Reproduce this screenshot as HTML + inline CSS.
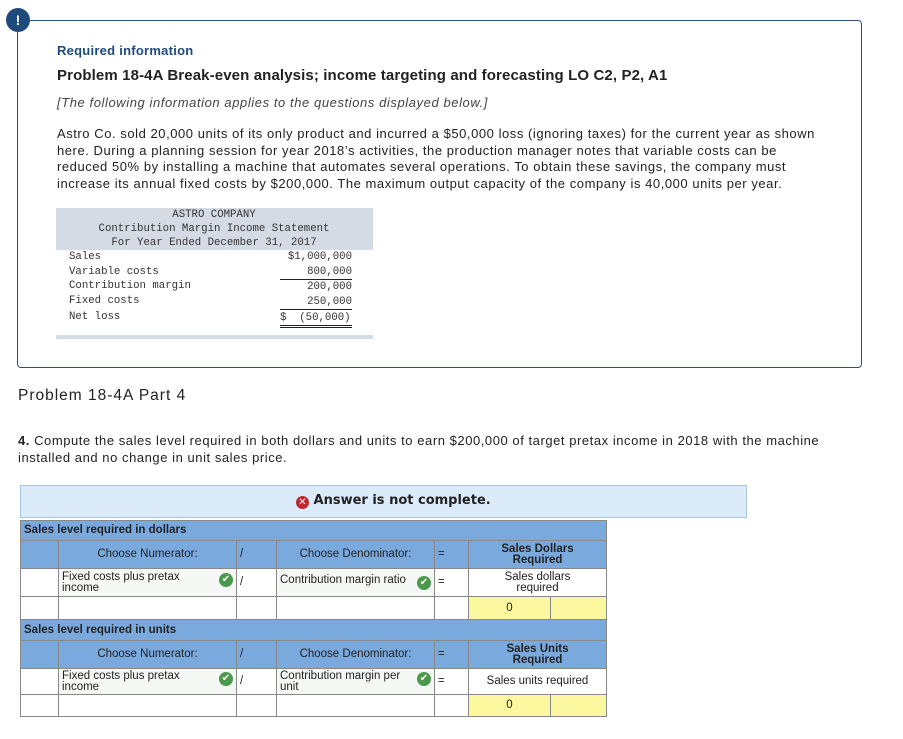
<!DOCTYPE html>
<html><head><meta charset="utf-8"><style>
body{margin:0;width:903px;height:739px;background:#fff;font-family:"Liberation Sans",Arial,sans-serif;color:#222;position:relative;overflow:hidden}
.abs{position:absolute}
.box{left:17px;top:20px;width:843px;height:346px;border:1px solid #2d4f7c;border-radius:4px}
.badge{left:6px;top:8px;width:24px;height:24px;border-radius:50%;background:#1f4a7c;color:#fff;font-weight:bold;font-size:14px;text-align:center;line-height:24px}
.p{font-size:13px;line-height:16.5px;white-space:nowrap;letter-spacing:0.55px}
.mono{font-family:"Liberation Mono",monospace;font-size:10.7px;color:#333}
table.t{border-collapse:collapse;font-size:11.5px;position:absolute;left:20px;top:520px;table-layout:fixed}
table.t td{border:1px solid #888;padding:0 3px;line-height:11px;vertical-align:middle;box-sizing:border-box}
.hd td{background:#7aa9de}
.sec td{background:#7aa9de;font-weight:bold;border-color:#7aa9de}
.y{background:#fbf8a0}
.g{background:#f6f8f6}
.ck{display:inline-block;width:14px;height:14px;border-radius:50%;background:#4b9a4b;color:#fff;font-size:10px;line-height:14px;text-align:center;float:right;margin-top:1px}
</style></head><body>
<div class="abs box"></div>
<div class="abs badge">!</div>
<div class="abs" style="left:57px;top:43px;font-size:13px;font-weight:bold;color:#1f4a7c;letter-spacing:0.25px">Required information</div>
<div class="abs" style="left:57px;top:67px;font-size:15px;font-weight:bold;color:#222;letter-spacing:0.12px">Problem 18-4A Break-even analysis; income targeting and forecasting LO C2, P2, A1</div>
<div class="abs p" style="left:57px;top:95px;font-style:italic;color:#444;letter-spacing:0.58px">[The following information applies to the questions displayed below.]</div>
<div class="abs p" style="left:57px;top:126px">Astro Co. sold 20,000 units of its only product and incurred a $50,000 loss (ignoring taxes) for the current year as shown<br>here. During a planning session for year 2018’s activities, the production manager notes that variable costs can be<br>reduced 50% by installing a machine that automates several operations. To obtain these savings, the company must<br>increase its annual fixed costs by $200,000. The maximum output capacity of the company is 40,000 units per year.</div>
<div class="abs" style="left:56px;top:208px;width:317px;height:42px;background:#d5dbe5"></div>
<div class="abs mono" style="left:56px;top:208px;width:316px;text-align:center;line-height:14px">ASTRO COMPANY<br>Contribution Margin Income Statement<br>For Year Ended December 31, 2017</div>
<div class="abs mono" style="left:69px;top:250px;line-height:14.5px">Sales<br>Variable costs<br>Contribution margin<br>Fixed costs</div>
<div class="abs mono" style="left:69px;top:311px">Net loss</div>
<div class="abs mono" style="left:280px;top:250px;width:72px;text-align:right;line-height:14.5px">$1,000,000<br><span style="display:inline-block;width:72px;border-bottom:1px solid #222">800,000</span><br>200,000<br><span style="display:inline-block;width:72px;border-bottom:1px solid #222">250,000</span></div>
<div class="abs mono" style="left:280px;top:311px;width:72px;border-bottom:3px double #222;line-height:14px">$ &nbsp;(50,000)</div>
<div class="abs" style="left:56px;top:335px;width:317px;height:4px;background:#d5dbe5"></div>
<div class="abs" style="left:18px;top:387px;font-size:15.5px;letter-spacing:1px">Problem 18-4A Part 4</div>
<div class="abs p" style="left:18px;top:433px"><b>4.</b> Compute the sales level required in both dollars and units to earn $200,000 of target pretax income in 2018 with the machine<br>installed and no change in unit sales price.</div>
<div class="abs" style="left:20px;top:485px;width:725px;height:31px;background:#dcebf9;border:1px solid #a8c4e0"></div>
<div class="abs" style="left:296px;top:493px;font-size:13px;font-weight:bold;font-family:'DejaVu Sans',sans-serif"><span style="display:inline-block;width:13px;height:13px;border-radius:50%;background:#c0282d;color:#fff;font-size:10px;line-height:13px;text-align:center;vertical-align:-1px">✕</span> Answer is not complete.</div>
<table class="t">
<colgroup><col style="width:38px"><col style="width:178px"><col style="width:40px"><col style="width:158px"><col style="width:34px"><col style="width:82px"><col style="width:56px"></colgroup>
<tr class="sec" style="height:20px"><td colspan="7">Sales level required in dollars</td></tr>
<tr class="hd" style="height:28px"><td></td><td style="text-align:center">Choose Numerator:</td><td>/</td><td style="text-align:center">Choose Denominator:</td><td>=</td><td colspan="2" style="text-align:center;font-weight:bold">Sales Dollars<br>Required</td></tr>
<tr style="height:28px"><td></td><td class="g">Fixed costs plus pretax<span class="ck">✔</span><br>income</td><td>/</td><td class="g">Contribution margin ratio<span class="ck">✔</span></td><td>=</td><td colspan="2" style="text-align:center">Sales dollars<br>required</td></tr>
<tr style="height:23px"><td></td><td></td><td></td><td></td><td></td><td class="y" style="text-align:center">0</td><td class="y"></td></tr>
<tr class="sec" style="height:21px"><td colspan="7">Sales level required in units</td></tr>
<tr class="hd" style="height:28px"><td></td><td style="text-align:center">Choose Numerator:</td><td>/</td><td style="text-align:center">Choose Denominator:</td><td>=</td><td colspan="2" style="text-align:center;font-weight:bold">Sales Units<br>Required</td></tr>
<tr style="height:26px"><td></td><td class="g">Fixed costs plus pretax<span class="ck">✔</span><br>income</td><td>/</td><td class="g">Contribution margin per<span class="ck">✔</span><br>unit</td><td>=</td><td colspan="2" style="text-align:center">Sales units required</td></tr>
<tr style="height:22px"><td></td><td></td><td></td><td></td><td></td><td class="y" style="text-align:center">0</td><td class="y"></td></tr>
</table>
</body></html>
